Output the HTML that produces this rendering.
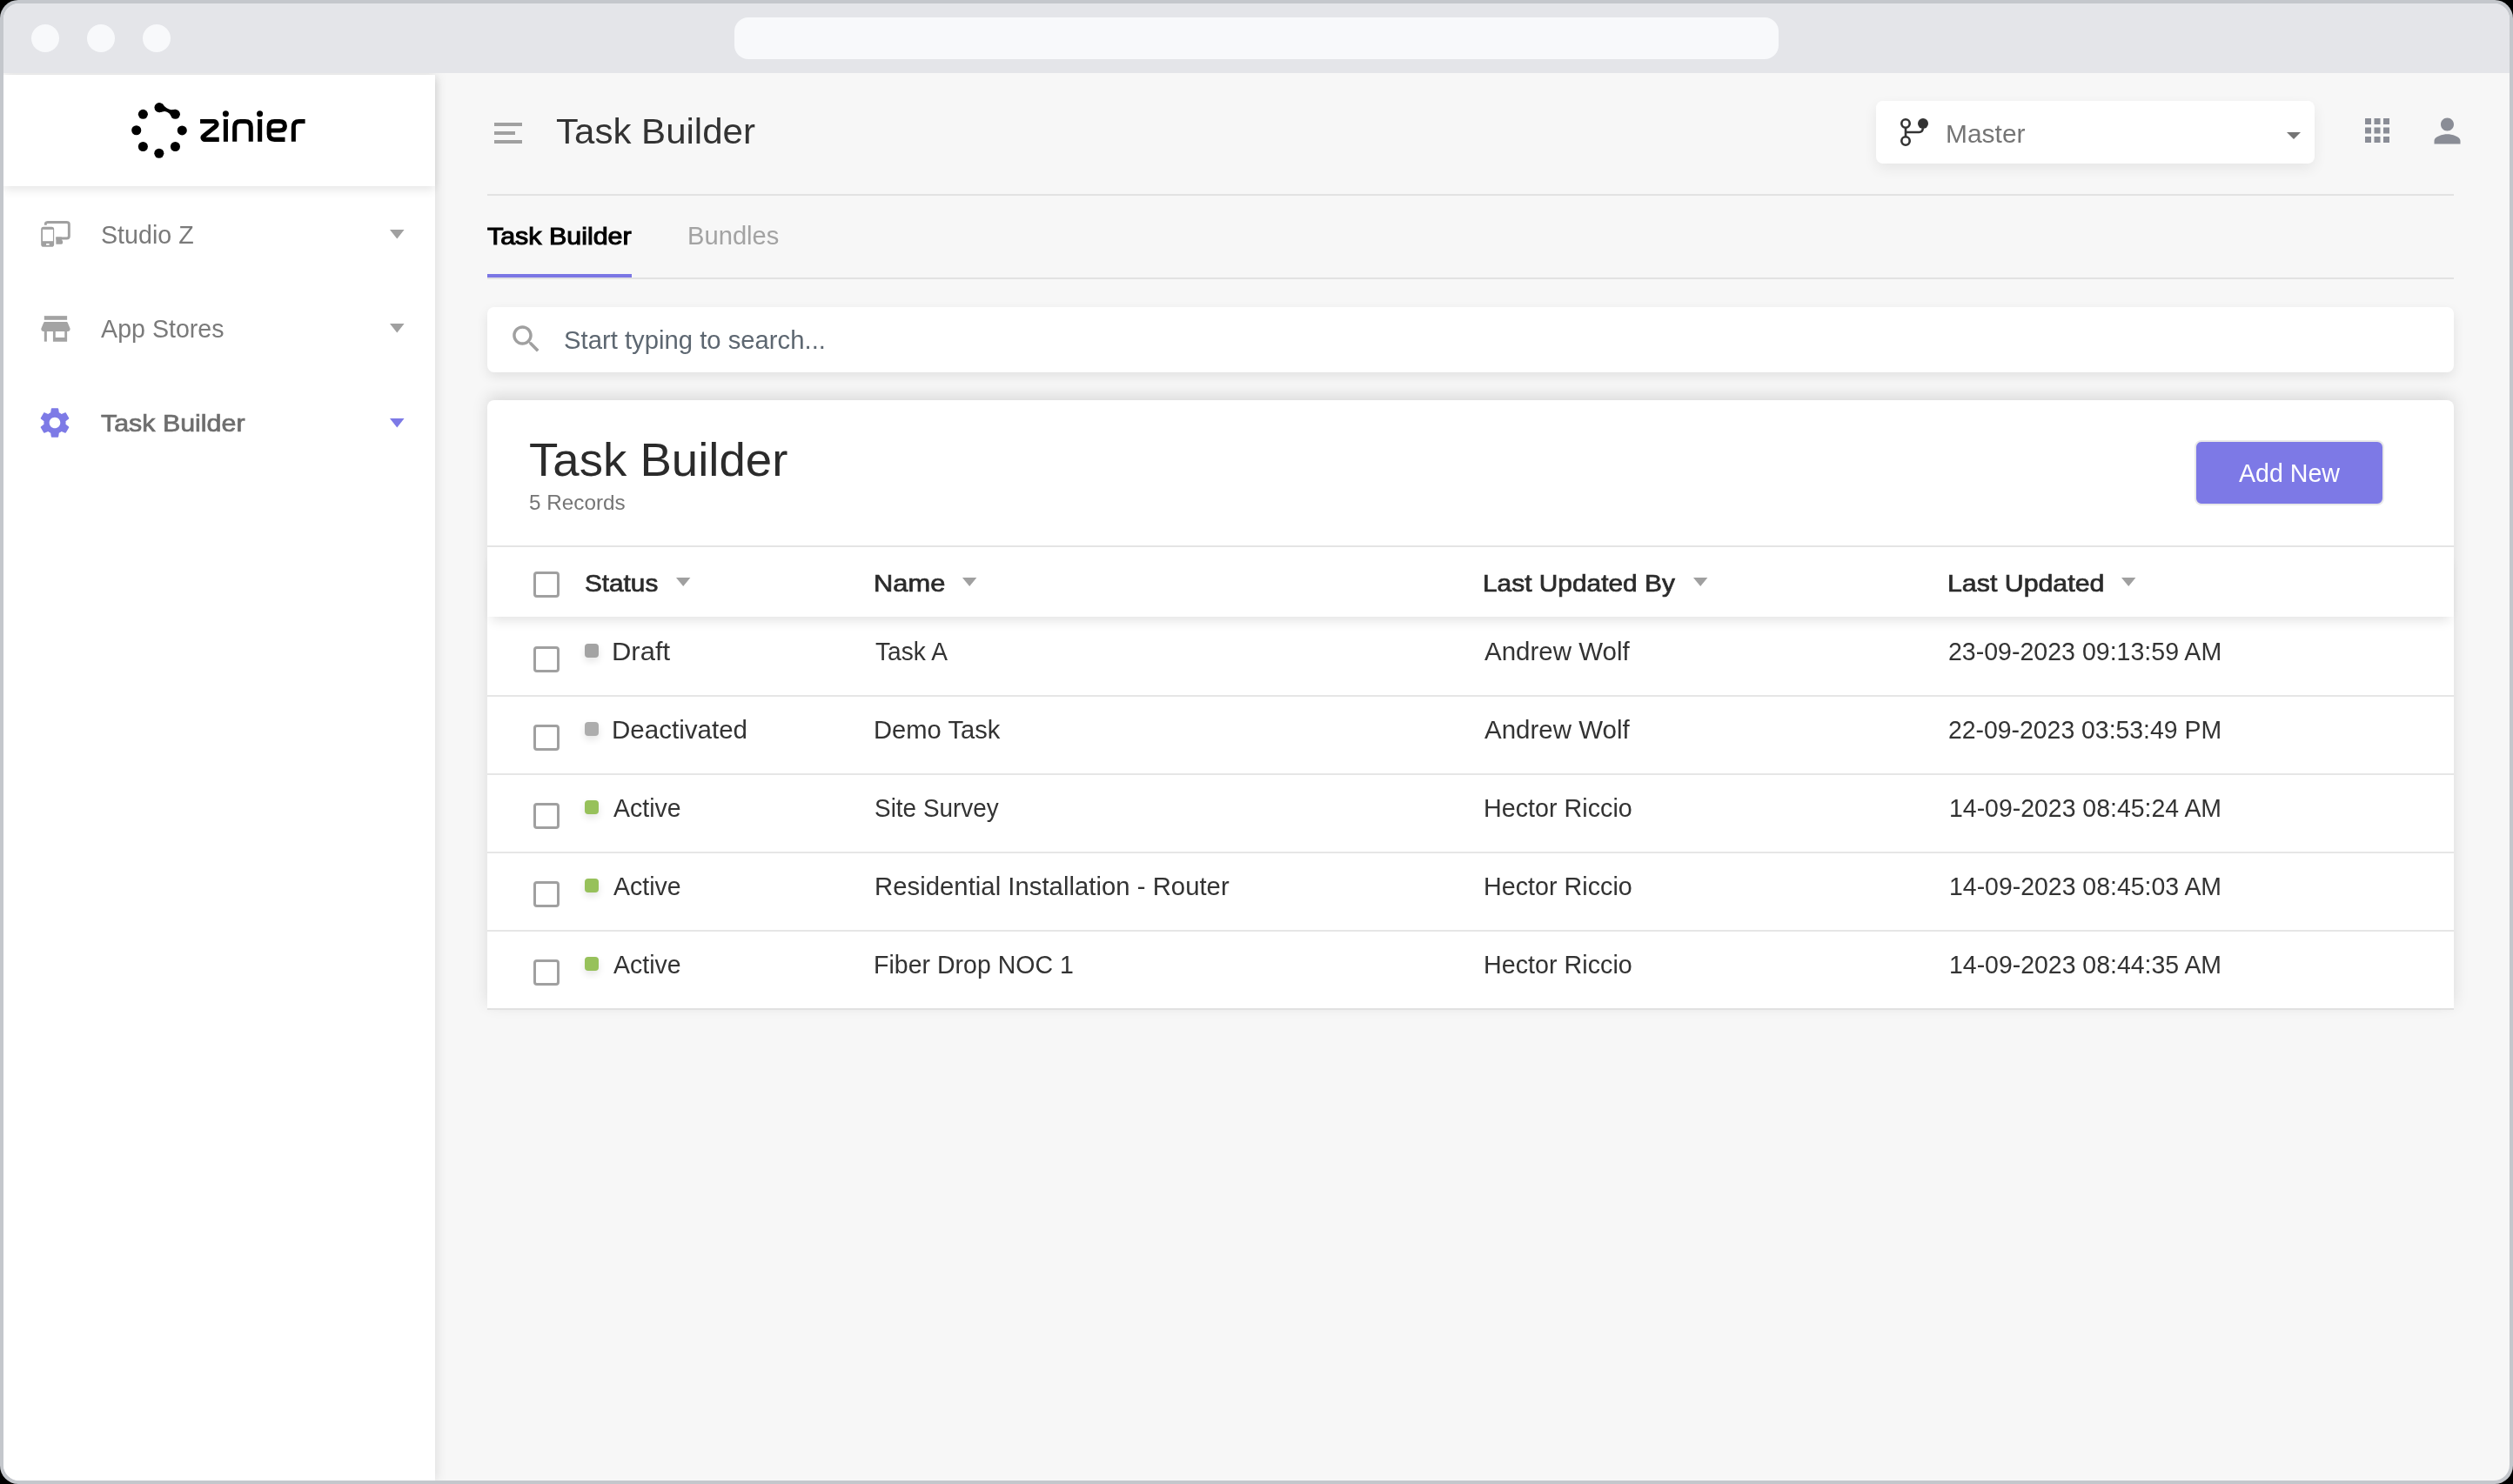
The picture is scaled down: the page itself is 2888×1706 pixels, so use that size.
<!DOCTYPE html>
<html>
<head>
<meta charset="utf-8">
<title>Task Builder</title>
<style>
html,body{margin:0;padding:0;}
body{width:2888px;height:1706px;background:#000;position:relative;font-family:"Liberation Sans",sans-serif;}
.frame{position:absolute;left:0;top:0;width:2888px;height:1706px;border-radius:21px;background:#c4c7cc;}
.inner{position:absolute;left:4px;top:4px;width:2880px;height:1698px;border-radius:18px;overflow:hidden;background:#f7f7f7;}
.page{position:absolute;left:-4px;top:-4px;width:2888px;height:1706px;will-change:transform;}
.abs{position:absolute;}
.t{position:absolute;white-space:pre;transform-origin:0 0;}
.titlebar{left:4px;top:4px;width:2880px;height:80px;background:#e4e5e9;}
.dot{width:32px;height:32px;border-radius:50%;background:#f8f9fb;top:28px;}
.url{left:844px;top:20px;width:1200px;height:48px;border-radius:16px;background:#f8f9fb;}
.sidebar{left:4px;top:86px;width:496px;height:1616px;background:#fff;box-shadow:2px 0 12px rgba(0,0,0,0.10);}
.logo{left:4px;top:86px;width:496px;height:128px;background:#fff;box-shadow:0 4px 11px rgba(0,0,0,0.10);}
.hline{height:2px;background:#e2e2e2;left:560px;width:2260px;}
.search{left:560px;top:353px;width:2260px;height:75px;border-radius:8px;background:#fff;box-shadow:0 5px 14px rgba(0,0,0,0.09);}
.card{left:560px;top:460px;width:2260px;height:700px;border-radius:8px 8px 0 0;background:#fff;box-shadow:0 -5px 18px rgba(0,0,0,0.12);}
.thead{left:560px;top:629px;width:2260px;height:80px;background:#fff;box-shadow:0 9px 13px -5px rgba(0,0,0,0.12);}
.rline{left:560px;width:2260px;height:2px;background:#e6e6e6;}
.cb{left:613px;width:24px;height:24px;border:3px solid #a0a0a0;border-radius:4px;background:#fff;}
.sd{left:672px;width:16px;height:16px;border-radius:4px;box-shadow:0 4px 9px rgba(0,0,0,0.11);}
.btn{left:2522px;top:506px;width:214px;height:71px;border:2px solid #e9e9e9;border-radius:8px;background:#7d79e6;}
.dd{left:2156px;top:116px;width:504px;height:72px;border-radius:8px;background:#fff;box-shadow:0 6px 16px rgba(0,0,0,0.07);}
svg{position:absolute;overflow:visible;}
</style>
</head>
<body>
<div class="frame"></div>
<div class="inner"><div class="page">


<!-- main header -->
<svg style="left:568px;top:141px" width="32" height="24" viewBox="0 0 32 24"><path fill="#a0a0a0" d="M0 0h32v4H0zM0 10h24v4H0zM0 20h32v4H0z"/></svg>
<div class="abs hline" style="top:223px"></div>
<div class="abs hline" style="top:319px"></div>
<div class="abs" style="left:560px;top:315px;width:166px;height:4px;background:#7b76e4"></div>

<!-- environment dropdown -->
<div class="abs dd"></div>
<svg style="left:2180px;top:132px" width="40" height="40" viewBox="0 0 40 40">
 <g fill="none" stroke="#333" stroke-width="2.6">
  <circle cx="10" cy="10" r="4.7"/>
  <circle cx="10" cy="30" r="4.7"/>
  <path d="M10 14.7V25.3"/>
  <path d="M10 20H25.5Q29.5 20 29.8 15.5"/>
 </g>
 <circle cx="30" cy="10" r="6" fill="#333"/>
</svg>
<svg style="left:2628px;top:152px" width="16" height="8" viewBox="0 0 16 8"><path fill="#757575" d="M0 0h16l-8 8z"/></svg>
<svg style="left:2711px;top:129px" width="42" height="42" viewBox="0 0 24 24"><path fill="#8a8d96" d="M4 8h4V4H4v4zm6 12h4v-4h-4v4zm-6 0h4v-4H4v4zm0-6h4v-4H4v4zm6 0h4v-4h-4v4zm6-10v4h4V4h-4zm-6 4h4V4h-4v4zm6 6h4v-4h-4v4zm0 6h4v-4h-4v4z"/></svg>
<svg style="left:2789.5px;top:127.5px" width="45" height="45" viewBox="0 0 24 24"><path fill="#8a8d96" d="M12 12c2.21 0 4-1.79 4-4s-1.79-4-4-4-4 1.79-4 4 1.79 4 4 4zm0 2c-2.67 0-8 1.34-8 4v2h16v-2c0-2.66-5.33-4-8-4z"/></svg>

<!-- search -->
<div class="abs search"></div>
<svg style="left:584px;top:369.2px" width="41.6" height="41.6" viewBox="0 0 24 24"><path fill="#a0a0a0" d="M15.5 14h-.79l-.28-.27C15.41 12.59 16 11.11 16 9.5 16 5.91 13.09 3 9.5 3S3 5.91 3 9.5 5.91 16 9.5 16c1.61 0 3.09-.59 4.23-1.57l.27.28v.79l5 4.99L20.49 19l-4.99-5zm-6 0C7.01 14 5 11.99 5 9.5S7.01 5 9.5 5 14 7.01 14 9.5 11.99 14 9.5 14z"/></svg>

<!-- card -->
<div class="abs card"></div>
<div class="abs rline" style="top:627px;background:#e4e4e4"></div>
<div class="abs btn"></div>
<div class="abs rline" style="top:799px"></div>
<div class="abs cb" style="top:743px"></div>
<div class="abs sd" style="top:740px;background:#a3a3a3"></div>
<div class="abs rline" style="top:889px"></div>
<div class="abs cb" style="top:833px"></div>
<div class="abs sd" style="top:830px;background:#adadad"></div>
<div class="abs rline" style="top:979px"></div>
<div class="abs cb" style="top:923px"></div>
<div class="abs sd" style="top:920px;background:#97c15b"></div>
<div class="abs rline" style="top:1069px"></div>
<div class="abs cb" style="top:1013px"></div>
<div class="abs sd" style="top:1010px;background:#97c15b"></div>
<div class="abs rline" style="top:1159px;background:#e1e1e1"></div>
<div class="abs cb" style="top:1103px"></div>
<div class="abs sd" style="top:1100px;background:#97c15b"></div>
<div class="abs thead"></div>
<div class="abs cb" style="top:657px"></div>
<svg style="left:777px;top:664px" width="16.4" height="10" viewBox="0 0 16.4 10"><path fill="#a0a0a0" d="M0 0h16.4l-8.2 10z"/></svg>
<svg style="left:1106px;top:664px" width="16.4" height="10" viewBox="0 0 16.4 10"><path fill="#a0a0a0" d="M0 0h16.4l-8.2 10z"/></svg>
<svg style="left:1946px;top:664px" width="16.4" height="10" viewBox="0 0 16.4 10"><path fill="#a0a0a0" d="M0 0h16.4l-8.2 10z"/></svg>
<svg style="left:2438.3px;top:664px" width="16.4" height="10" viewBox="0 0 16.4 10"><path fill="#a0a0a0" d="M0 0h16.4l-8.2 10z"/></svg>

<!-- sidebar -->
<div class="abs sidebar"></div>
<div class="abs logo"></div>
<svg style="left:130px;top:100px" width="240" height="100" viewBox="0 0 2513 1047">
 <g fill="#000">
  <circle cx="555" cy="247" r="58"/><circle cx="748" cy="328" r="58"/><circle cx="830" cy="523" r="58"/><circle cx="748" cy="717" r="58"/>
  <circle cx="553" cy="798" r="58"/><circle cx="360" cy="717" r="58"/><circle cx="280" cy="521" r="58"/><circle cx="360" cy="328" r="58"/>
  <path d="M590 200 Q640 270 700 275 L748 270 L715 375 Q680 300 620 292 L555 305 Z"/>
  <circle cx="1355" cy="323" r="37"/><circle cx="1765" cy="323" r="37"/>
 </g>
 <g fill="none" stroke="#000" stroke-width="53" stroke-linejoin="round">
  <path d="M1048 414H1212a34 34 0 0 1 22 60L1088 592a22 22 0 0 0 14 40H1275"/>
  <path d="M1355 388V658"/>
  <path d="M1463 658V482Q1463 414 1531 414H1590Q1657 414 1657 482V658"/>
  <path d="M1766 388V658"/>
  <path d="M2068 632H1942Q1876 632 1876 566V480Q1876 414 1942 414H2004Q2067 414 2067 470Q2067 523 2004 523H1876"/>
  <path d="M2171 658V480Q2171 414 2237 414H2310"/>
 </g>
</svg>
<svg style="left:30px;top:240px" width="100" height="60" viewBox="0 0 2473 1484">
 <path fill="none" stroke="#a0a0a0" stroke-width="72" d="M552 465V445Q552 382 615 382H1155Q1220 382 1220 445V780Q1220 842 1155 842H850"/>
 <path fill="#a0a0a0" d="M850 806H1010V872L1042 925V965Q1042 1005 1000 1005H850Z"/>
 <rect x="425" y="515" width="370" height="570" rx="70" fill="#a0a0a0"/>
 <rect x="470" y="590" width="295" height="330" fill="#fff"/>
 <rect x="570" y="990" width="90" height="42" rx="8" fill="#fff"/>
</svg>
<svg style="left:30px;top:350px" width="100" height="60" viewBox="0 0 2473 1484">
 <g fill="#a3a3a3">
  <rect x="515" y="325" width="650" height="115"/>
  <path d="M525 495H1155Q1170 495 1176 510L1250 680Q1262 765 1180 765H500Q418 765 430 680L504 510Q510 495 525 495Z"/>
  <rect x="515" y="760" width="75" height="295"/>
  <path d="M765 760H1165V1055H765ZM835 765V940H1095V765Z" fill-rule="evenodd"/>
 </g>
</svg>
<svg style="left:42.2px;top:464.9px" width="42" height="42" viewBox="0 0 24 24"><path fill="#7d7ae6" d="M19.14 12.94c.04-.3.06-.61.06-.94 0-.32-.02-.64-.07-.94l2.03-1.58c.18-.14.23-.41.12-.61l-1.92-3.32c-.12-.22-.37-.29-.59-.22l-2.39.96c-.5-.38-1.03-.7-1.62-.94l-.36-2.54c-.04-.24-.24-.41-.48-.41h-3.84c-.24 0-.43.17-.47.41l-.36 2.54c-.59.24-1.13.57-1.62.94l-2.39-.96c-.22-.08-.47 0-.59.22L2.74 8.87c-.12.21-.08.47.12.61l2.03 1.58c-.05.3-.09.63-.09.94s.02.64.07.94l-2.03 1.58c-.18.14-.23.41-.12.61l1.92 3.32c.12.22.37.29.59.22l2.39-.96c.5.38 1.03.7 1.62.94l.36 2.54c.05.24.24.41.48.41h3.84c.24 0 .44-.17.47-.41l.36-2.54c.59-.24 1.13-.56 1.62-.94l2.39.96c.22.08.47 0 .59-.22l1.92-3.32c.12-.22.07-.47-.12-.61l-2.01-1.58zM12 15.6c-1.98 0-3.6-1.62-3.6-3.6s1.62-3.6 3.6-3.6 3.6 1.62 3.6 3.6-1.62 3.6-3.6 3.6z"/></svg>
<svg style="left:447.7px;top:264px" width="16.6" height="10.4" viewBox="0 0 16.6 10.4"><path fill="#a0a0a0" d="M0 0h16.6l-8.3 10.4z"/></svg>
<svg style="left:447.7px;top:372.3px" width="16.6" height="10.4" viewBox="0 0 16.6 10.4"><path fill="#a0a0a0" d="M0 0h16.6l-8.3 10.4z"/></svg>
<svg style="left:447.7px;top:480.5px" width="16.6" height="10.4" viewBox="0 0 16.6 10.4"><path fill="#7d7ae6" d="M0 0h16.6l-8.3 10.4z"/></svg>
<div class="abs titlebar"></div>
<div class="abs dot" style="left:36px"></div>
<div class="abs dot" style="left:100px"></div>
<div class="abs dot" style="left:164px"></div>
<div class="abs url"></div>

<div class="t" style="left:639.27px;top:130.96px;font-size:40.8px;line-height:40.8px;font-weight:400;color:#333333;transform:scaleX(1.0303);">Task Builder</div>
<div class="t" style="left:559.90px;top:257.70px;font-size:27.5px;line-height:27.5px;font-weight:400;color:#000000;transform:scaleX(1.1060);-webkit-text-stroke:1.05px #000000;">Task Builder</div>
<div class="t" style="left:789.96px;top:257.29px;font-size:28.6px;line-height:28.6px;font-weight:400;color:#a3a3a3;transform:scaleX(1.0198);">Bundles</div>
<div class="t" style="left:648.18px;top:377.29px;font-size:28.6px;line-height:28.6px;font-weight:400;color:#5d6771;transform:scaleX(1.0234);">Start typing to search...</div>
<div class="t" style="left:607.67px;top:501.64px;font-size:53.0px;line-height:53.0px;font-weight:400;color:#2b2b2b;transform:scaleX(1.0303);">Task Builder</div>
<div class="t" style="left:607.71px;top:565.76px;font-size:24.5px;line-height:24.5px;font-weight:400;color:#757575;transform:scaleX(0.9918);">5 Records</div>
<div class="t" style="left:2573.00px;top:530.29px;font-size:28.6px;line-height:28.6px;font-weight:400;color:#ffffff;transform:scaleX(1.0000);">Add New</div>
<div class="t" style="left:671.83px;top:656.53px;font-size:27.9px;line-height:27.9px;font-weight:400;color:#2b2b2b;transform:scaleX(1.0654);-webkit-text-stroke:0.7px #2b2b2b;">Status</div>
<div class="t" style="left:1004.09px;top:656.53px;font-size:27.9px;line-height:27.9px;font-weight:400;color:#2b2b2b;transform:scaleX(1.1069);-webkit-text-stroke:0.7px #2b2b2b;">Name</div>
<div class="t" style="left:1703.86px;top:656.53px;font-size:27.9px;line-height:27.9px;font-weight:400;color:#2b2b2b;transform:scaleX(1.0712);-webkit-text-stroke:0.7px #2b2b2b;">Last Updated By</div>
<div class="t" style="left:2237.63px;top:656.53px;font-size:27.9px;line-height:27.9px;font-weight:400;color:#2b2b2b;transform:scaleX(1.0871);-webkit-text-stroke:0.7px #2b2b2b;">Last Updated</div>
<div class="t" style="left:116.30px;top:256.29px;font-size:28.6px;line-height:28.6px;font-weight:400;color:#7a7a7a;transform:scaleX(1.0019);">Studio Z</div>
<div class="t" style="left:116.10px;top:364.29px;font-size:28.6px;line-height:28.6px;font-weight:400;color:#7a7a7a;transform:scaleX(1.0000);">App Stores</div>
<div class="t" style="left:116.30px;top:472.53px;font-size:27.9px;line-height:27.9px;font-weight:400;color:#6e6e6e;transform:scaleX(1.0895);-webkit-text-stroke:0.7px #6e6e6e;">Task Builder</div>
<div class="t" style="left:2235.61px;top:140.29px;font-size:28.6px;line-height:28.6px;font-weight:400;color:#757575;transform:scaleX(1.0471);">Master</div>
<div class="t" style="left:703.33px;top:735.29px;font-size:28.6px;line-height:28.6px;font-weight:400;color:#333333;transform:scaleX(1.0833);">Draft</div>
<div class="t" style="left:1006.40px;top:735.29px;font-size:28.6px;line-height:28.6px;font-weight:400;color:#333333;transform:scaleX(0.9857);">Task A</div>
<div class="t" style="left:1705.90px;top:735.29px;font-size:28.6px;line-height:28.6px;font-weight:400;color:#333333;transform:scaleX(1.0315);">Andrew Wolf</div>
<div class="t" style="left:2238.60px;top:735.29px;font-size:28.6px;line-height:28.6px;font-weight:400;color:#333333;transform:scaleX(0.9981);">23-09-2023 09:13:59 AM</div>
<div class="t" style="left:703.43px;top:825.29px;font-size:28.6px;line-height:28.6px;font-weight:400;color:#333333;transform:scaleX(1.0333);">Deactivated</div>
<div class="t" style="left:1004.36px;top:825.29px;font-size:28.6px;line-height:28.6px;font-weight:400;color:#333333;transform:scaleX(1.0206);">Demo Task</div>
<div class="t" style="left:1705.90px;top:825.29px;font-size:28.6px;line-height:28.6px;font-weight:400;color:#333333;transform:scaleX(1.0315);">Andrew Wolf</div>
<div class="t" style="left:2238.61px;top:825.29px;font-size:28.6px;line-height:28.6px;font-weight:400;color:#333333;transform:scaleX(0.9927);">22-09-2023 03:53:49 PM</div>
<div class="t" style="left:704.60px;top:915.29px;font-size:28.6px;line-height:28.6px;font-weight:400;color:#333333;transform:scaleX(0.9961);">Active</div>
<div class="t" style="left:1005.42px;top:915.29px;font-size:28.6px;line-height:28.6px;font-weight:400;color:#333333;transform:scaleX(0.9766);">Site Survey</div>
<div class="t" style="left:1704.89px;top:915.29px;font-size:28.6px;line-height:28.6px;font-weight:400;color:#333333;transform:scaleX(1.0048);">Hector Riccio</div>
<div class="t" style="left:2239.71px;top:915.29px;font-size:28.6px;line-height:28.6px;font-weight:400;color:#333333;transform:scaleX(0.9945);">14-09-2023 08:45:24 AM</div>
<div class="t" style="left:704.60px;top:1005.29px;font-size:28.6px;line-height:28.6px;font-weight:400;color:#333333;transform:scaleX(0.9961);">Active</div>
<div class="t" style="left:1004.95px;top:1005.29px;font-size:28.6px;line-height:28.6px;font-weight:400;color:#333333;transform:scaleX(1.0261);">Residential Installation - Router</div>
<div class="t" style="left:1704.89px;top:1005.29px;font-size:28.6px;line-height:28.6px;font-weight:400;color:#333333;transform:scaleX(1.0048);">Hector Riccio</div>
<div class="t" style="left:2239.71px;top:1005.29px;font-size:28.6px;line-height:28.6px;font-weight:400;color:#333333;transform:scaleX(0.9945);">14-09-2023 08:45:03 AM</div>
<div class="t" style="left:704.60px;top:1095.29px;font-size:28.6px;line-height:28.6px;font-weight:400;color:#333333;transform:scaleX(0.9961);">Active</div>
<div class="t" style="left:1004.40px;top:1095.29px;font-size:28.6px;line-height:28.6px;font-weight:400;color:#333333;transform:scaleX(0.9982);">Fiber Drop NOC 1</div>
<div class="t" style="left:1704.89px;top:1095.29px;font-size:28.6px;line-height:28.6px;font-weight:400;color:#333333;transform:scaleX(1.0048);">Hector Riccio</div>
<div class="t" style="left:2239.71px;top:1095.29px;font-size:28.6px;line-height:28.6px;font-weight:400;color:#333333;transform:scaleX(0.9945);">14-09-2023 08:44:35 AM</div>
</div></div>
</body>
</html>
